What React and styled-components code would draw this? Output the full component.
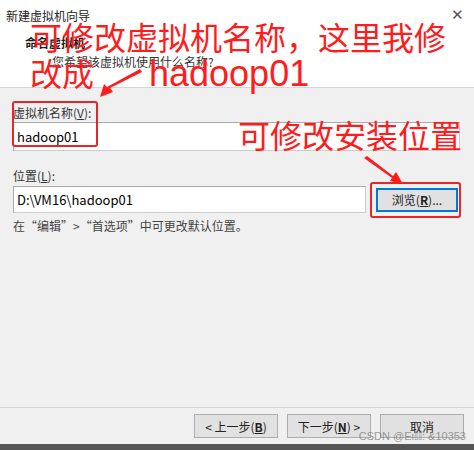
import React from 'react';
import styled, { createGlobalStyle } from 'styled-components';

const GlobalStyle = createGlobalStyle`
  html, body {
    margin: 0;
    padding: 0;
    background: #f0f0f0;
  }
`

const Window = styled.div`
  position: relative;
  width: 474px;
  height: 450px;
  display: flex;
  flex-direction: column;
  font-family: "Noto Sans CJK SC", "Liberation Sans", sans-serif;
  font-size: 12px;
  color: #1a1a1a;
  overflow: hidden;
  background: #f0f0f0;
`

const Top = styled.div`
  background: #fff;
  height: 88px;
  border-bottom: 1px solid #d6d6d6;
  box-sizing: border-box;
  display: flex;
  flex-direction: column;
`

const TitleBar = styled.div`
  height: 30px;
  display: flex;
  align-items: center;
  justify-content: space-between;
  padding: 0 10px 0 6px;
  font-size: 12px;
  color: #222;
`

const Close = styled.span`
  font-family: "DejaVu Sans", sans-serif;
  font-size: 15px;
  color: #555;
  font-weight: 300;
`

const Heading = styled.div`
  font-weight: bold;
  padding-left: 25px;
  margin-top: 5px;
  line-height: 16px;
`

const SubHeading = styled.div`
  padding-left: 52px;
  margin-top: 3px;
  line-height: 16px;
  color: #333;
`

const Body = styled.div`
  flex: 1;
  padding: 17px 14px 0 13px;
  display: flex;
  flex-direction: column;
`

const Label = styled.div`
  line-height: 15px;
  margin-top: ${p => p.$gap || 0}px;
  color: #333;
  u { text-decoration: underline; }
`

const TextInput = styled.div`
  height: ${p => p.$h}px;
  box-sizing: border-box;
  background: #fff;
  border: 1px solid #7a7a7a;
  border-color: #aaa #ccc #ccc #aaa;
  display: flex;
  align-items: center;
  padding-left: 3px;
  font-size: 13px;
  color: #000;
  margin-top: 2px;
  flex: ${p => (p.$grow ? 1 : 'none')};
`

const Row = styled.div`
  display: flex;
  align-items: center;
  gap: 10px;
  margin-top: 3px;
  padding-right: 2px;
  ${TextInput} { margin-top: 0; }
`

const Button = styled.div`
  width: ${p => p.$w || 84}px;
  height: 24px;
  box-sizing: border-box;
  background: #e1e1e1;
  border: 1px solid ${p => (p.$focus ? '#0078d7' : '#adadad')};
  box-shadow: ${p => (p.$focus ? 'inset 0 0 0 1px #0078d7' : 'none')};
  display: flex;
  align-items: center;
  justify-content: center;
  font-size: 12px;
  color: #222;
  u { font-weight: bold; }
`

const Hint = styled.div`
  margin-top: 5px;
  line-height: 15px;
  color: #444;
`

const Footer = styled.div`
  height: 36px;
  border-top: 1px solid #d4d4d4;
  display: flex;
  align-items: center;
  justify-content: flex-end;
  gap: 9px;
  padding-right: 10px;
`

const BottomBar = styled.div`
  height: 6px;
  background: #555;
`

const RedText = styled.div`
  position: absolute;
  left: ${p => p.$x}px;
  top: ${p => p.$y}px;
  color: #ff1c1c;
  font-family: "Noto Sans CJK SC", sans-serif;
  font-size: 32px;
  line-height: 35px;
  white-space: nowrap;
  pointer-events: none;
`

const Latin = styled.span`
  font-family: "Liberation Sans", "Noto Sans", sans-serif;
  font-size: 36px;
  margin-left: 55px;
`

const RedBox = styled.div`
  position: absolute;
  left: ${p => p.$x}px;
  top: ${p => p.$y}px;
  width: ${p => p.$w}px;
  height: ${p => p.$h}px;
  box-sizing: border-box;
  border: 2px solid #e8262a;
  border-radius: 3px;
`

const Arrow = styled.svg`
  position: absolute;
  left: 0;
  top: 0;
  pointer-events: none;
`

const Watermark = styled.div`
  position: absolute;
  right: 8px;
  bottom: 7px;
  font-family: "Liberation Sans", sans-serif;
  font-size: 11px;
  color: rgba(120, 120, 120, 0.75);
`

export default function App() {
  return (
    <Window>
      <GlobalStyle />
      <Top>
        <TitleBar>
          <span>新建虚拟机向导</span>
          <Close>✕</Close>
        </TitleBar>
        <Heading>命名虚拟机</Heading>
        <SubHeading>您希望该虚拟机使用什么名称?</SubHeading>
      </Top>
      <Body>
        <Label>虚拟机名称(<u>V</u>):</Label>
        <TextInput $h={29}>hadoop01</TextInput>
        <Label $gap={17}>位置(<u>L</u>):</Label>
        <Row>
          <TextInput $h={27} $grow>D:\VM16\hadoop01</TextInput>
          <Button $w={82} $focus>浏览(<u>R</u>)...</Button>
        </Row>
        <Hint>在“编辑”&gt;“首选项”中可更改默认位置。</Hint>
      </Body>
      <Footer>
        <Button>&lt; 上一步(<u>B</u>)</Button>
        <Button>下一步(<u>N</u>) &gt;</Button>
        <Button>取消</Button>
      </Footer>
      <BottomBar />

      <RedText $x={30} $y={19}>可修改虚拟机名称，这里我修</RedText>
      <RedText $x={30} $y={55}>改成<Latin>hadoop01</Latin></RedText>
      <RedText $x={238} $y={117}>可修改安装位置</RedText>
      <RedBox $x={12} $y={101} $w={86} $h={46} />
      <RedBox $x={370} $y={182} $w={91} $h={36} />
      <Arrow width="474" height="450">
        <polygon points="140,69 142,72 110,88 113,92 100,97 104,84 107,87" fill="#ff1c1c" />
        <polygon points="364,158 367,156 393,176 396,172 403,184 390,181 392,178" fill="#ff1c1c" />
      </Arrow>
      <Watermark>CSDN @Eι𝕀𝕀: &amp;10353</Watermark>
    </Window>
  );
}
